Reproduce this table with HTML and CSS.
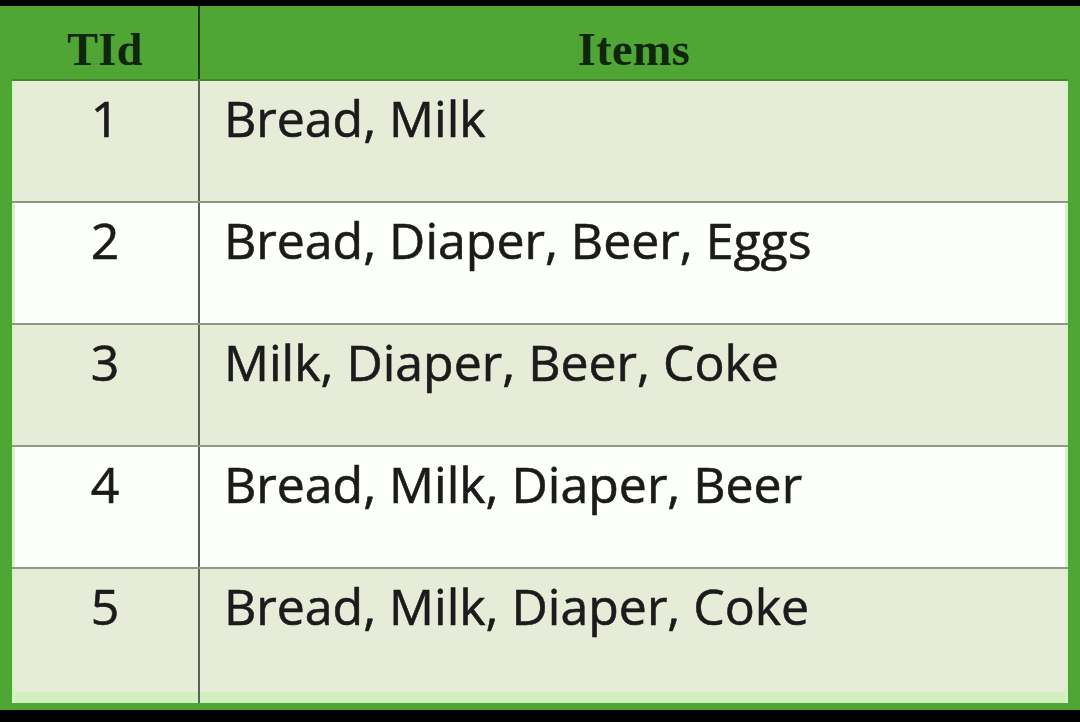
FILE: index.html
```html
<!DOCTYPE html>
<html>
<head>
<meta charset="utf-8">
<link rel="stylesheet" href="styles.css">
</head>
<body>
<div class="frame">
  <div class="table">
    <div class="row head">
      <div class="c1">TId</div>
      <div class="c2">Items</div>
    </div>
    <div class="row odd"><div class="c1">1</div><div class="c2">Bread, Milk</div></div>
    <div class="row even"><div class="c1">2</div><div class="c2">Bread, Diaper, Beer, Eggs</div></div>
    <div class="row odd"><div class="c1">3</div><div class="c2">Milk, Diaper, Beer, Coke</div></div>
    <div class="row even"><div class="c1">4</div><div class="c2">Bread, Milk, Diaper, Beer</div></div>
    <div class="row odd last"><div class="c1">5</div><div class="c2">Bread, Milk, Diaper, Coke</div></div>
  </div>
</div>
</body>
</html>
```

FILE: styles.css
```css
html, body {
  margin: 0;
  padding: 0;
  background: #000;
  width: 1080px;
  height: 722px;
  overflow: hidden;
}
body {
  padding-top: 6px;
  box-sizing: border-box;
}
.frame {
  background: #4fa634;
  height: 704px;
  padding: 0 12px;
  box-sizing: border-box;
}
.table {
  display: flex;
  flex-direction: column;
}
.row {
  display: grid;
  grid-template-columns: 188px 1fr;
  height: 122px;
  box-sizing: border-box;
  border-bottom: 2px solid #8d9a84;
  font-family: "Open Sans", "Noto Sans", sans-serif;
  font-size: 50px;
  letter-spacing: 0;
  color: #1b1b1b;
  -webkit-text-stroke: 0.6px #1b1b1b;
  box-shadow: inset 3px 0 0 #d6f3c8, inset -3px 0 0 #d6f3c8;
}
.row.head {
  height: 75px;
  border-bottom: 2px solid #3f8a2a;
  background: #4fa634;
  box-shadow: none;
  font-family: "Liberation Serif", serif;
  font-weight: bold;
  font-size: 46px;
  letter-spacing: 0.5px;
  color: #10260c;
  -webkit-text-stroke: 0;
}
.row.head .c1, .row.head .c2 {
  padding-top: 18px;
  line-height: 52px;
}
.row.odd { background: #e7ecd8; }
.row.even { background: #fdfffa; }
.row.last {
  border-bottom: 0;
  height: 134px;
  box-shadow: inset 3px 0 0 #d6f3c8, inset -3px 0 0 #d6f3c8, inset 0 -11px 0 #d2efc0;
}
.c1 {
  text-align: center;
  border-right: 2px solid #5a6355;
  padding-top: 7px;
  line-height: 60px;
}
.c2 {
  padding-left: 24px;
  padding-top: 7px;
  line-height: 60px;
}
.row.head .c1 { border-right: 2px solid #1e3a14; }
.row.head .c2 { text-align: center; padding-left: 0; }
```
